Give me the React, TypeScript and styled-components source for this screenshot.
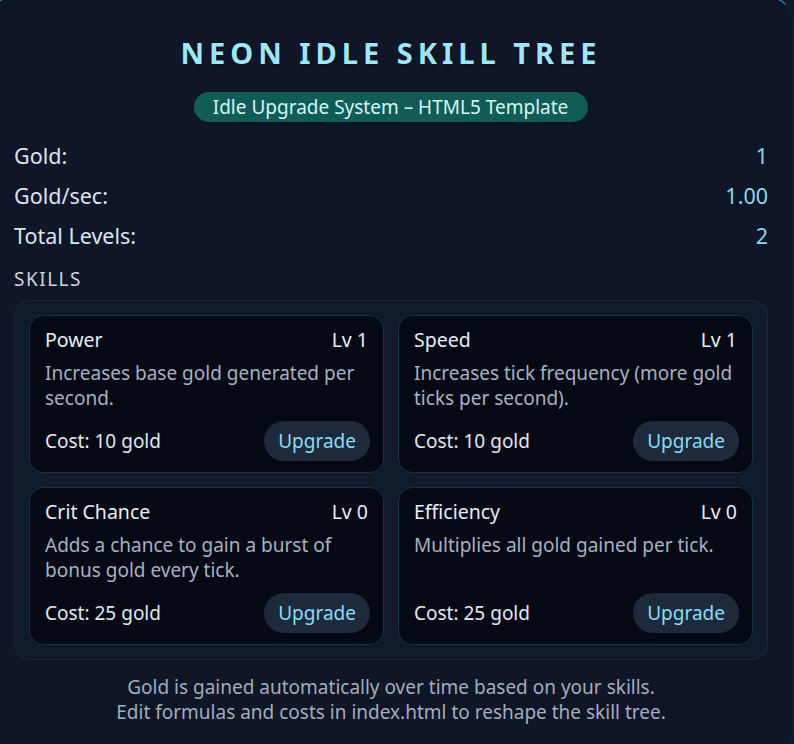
import React from 'react';
import styled, { createGlobalStyle } from 'styled-components';

const GlobalStyle = createGlobalStyle`
  html, body {
    margin: 0;
    padding: 0;
    background: #0f1627;
    overflow: hidden;
  }
  body {
    font-family: "Noto Sans", "Open Sans", sans-serif;
    color: #dbe4f0;
  }
`;

const Shell = styled.div`
  margin: -3px 1px 0 -12px;
  padding: 37px 24px 30px 25px;
  border: 1px solid rgba(30, 60, 90, 0.25);
  border-top-color: rgba(56, 189, 248, 0.75);
  border-radius: 24px;
  box-shadow: 0 0 18px rgba(56, 189, 248, 0.08);
`;

const Title = styled.h1`
  margin: 0;
  text-align: center;
  font-size: 29px;
  line-height: 36px;
  font-weight: 700;
  letter-spacing: 5px;
  color: #9ee6fb;
  text-shadow: 0 0 2px rgba(0, 0, 0, 0.9);
`;

const BadgeRow = styled.div`
  display: flex;
  justify-content: center;
  margin-top: 21px;
`;

const Badge = styled.span`
  display: inline-block;
  padding: 4px 20px 4px 19px;
  font-size: 19px;
  line-height: 22px;
  border-radius: 999px;
  background: #125c58;
  color: #d3f8f3;
`;

const Stats = styled.div`
  display: flex;
  flex-direction: column;
  gap: 16px;
  margin-top: 22px;
`;

const StatRow = styled.div`
  display: flex;
  justify-content: space-between;
  font-size: 21.5px;
  line-height: 24px;
`;

const StatLabel = styled.span`
  color: #dbe4f0;
`;

const StatValue = styled.span`
  color: #86d9ee;
`;

const SectionLabel = styled.div`
  margin-top: 20px;
  font-size: 19px;
  line-height: 23px;
  letter-spacing: 1.5px;
  color: #cbd5e1;
`;

const Panel = styled.div`
  margin-top: 9px;
  padding: 14px;
  border: 1px solid #1d2739;
  border-radius: 16px;
  background: #111a2b;
  display: grid;
  grid-template-columns: 1fr 1fr;
  gap: 14px;
`;

const Card = styled.div`
  display: flex;
  flex-direction: column;
  padding: 12px 15px 11px 15px;
  border: 1px solid #0d3550;
  border-radius: 14px;
  background: #050914;
`;

const CardHead = styled.div`
  display: flex;
  justify-content: space-between;
  font-size: 19.5px;
  line-height: 23px;
  color: #e8edf5;
`;

const Desc = styled.p`
  flex: 1;
  margin: 10px 0 10px;
  font-size: 19px;
  line-height: 25px;
  color: #a7b1c1;
`;

const CostRow = styled.div`
  display: flex;
  justify-content: space-between;
  align-items: center;
  font-size: 19px;
  color: #e2e8f0;
`;

const UpgradeButton = styled.button`
  height: 40px;
  padding: 0 14px;
  margin-right: -2px;
  border: none;
  border-radius: 999px;
  background: #1e293b;
  color: #86def5;
  font-family: inherit;
  font-size: 19px;
  cursor: pointer;
`;

const Footer = styled.div`
  margin-top: 15px;
  text-align: center;
  font-size: 19px;
  line-height: 25px;
  color: #a3adbd;
`;

interface Skill {
  name: string;
  level: number;
  desc: string;
  cost: number;
}

const skills: Skill[] = [
  { name: 'Power', level: 1, desc: 'Increases base gold generated per second.', cost: 10 },
  { name: 'Speed', level: 1, desc: 'Increases tick frequency (more gold ticks per second).', cost: 10 },
  { name: 'Crit Chance', level: 0, desc: 'Adds a chance to gain a burst of bonus gold every tick.', cost: 25 },
  { name: 'Efficiency', level: 0, desc: 'Multiplies all gold gained per tick.', cost: 25 },
];

export default function App() {
  return (
    <>
      <GlobalStyle />
      <Shell>
        <Title>NEON IDLE SKILL TREE</Title>
        <BadgeRow>
          <Badge>Idle Upgrade System – HTML5 Template</Badge>
        </BadgeRow>

        <Stats>
          <StatRow>
            <StatLabel>Gold:</StatLabel>
            <StatValue>1</StatValue>
          </StatRow>
          <StatRow>
            <StatLabel>Gold/sec:</StatLabel>
            <StatValue>1.00</StatValue>
          </StatRow>
          <StatRow>
            <StatLabel>Total Levels:</StatLabel>
            <StatValue>2</StatValue>
          </StatRow>
        </Stats>

        <SectionLabel>SKILLS</SectionLabel>
        <Panel>
          {skills.map((s) => (
            <Card key={s.name}>
              <CardHead>
                <span>{s.name}</span>
                <span>Lv {s.level}</span>
              </CardHead>
              <Desc>{s.desc}</Desc>
              <CostRow>
                <span>Cost: {s.cost} gold</span>
                <UpgradeButton>Upgrade</UpgradeButton>
              </CostRow>
            </Card>
          ))}
        </Panel>

        <Footer>
          Gold is gained automatically over time based on your skills.
          <br />
          Edit formulas and costs in index.html to reshape the skill tree.
        </Footer>
      </Shell>
    </>
  );
}
